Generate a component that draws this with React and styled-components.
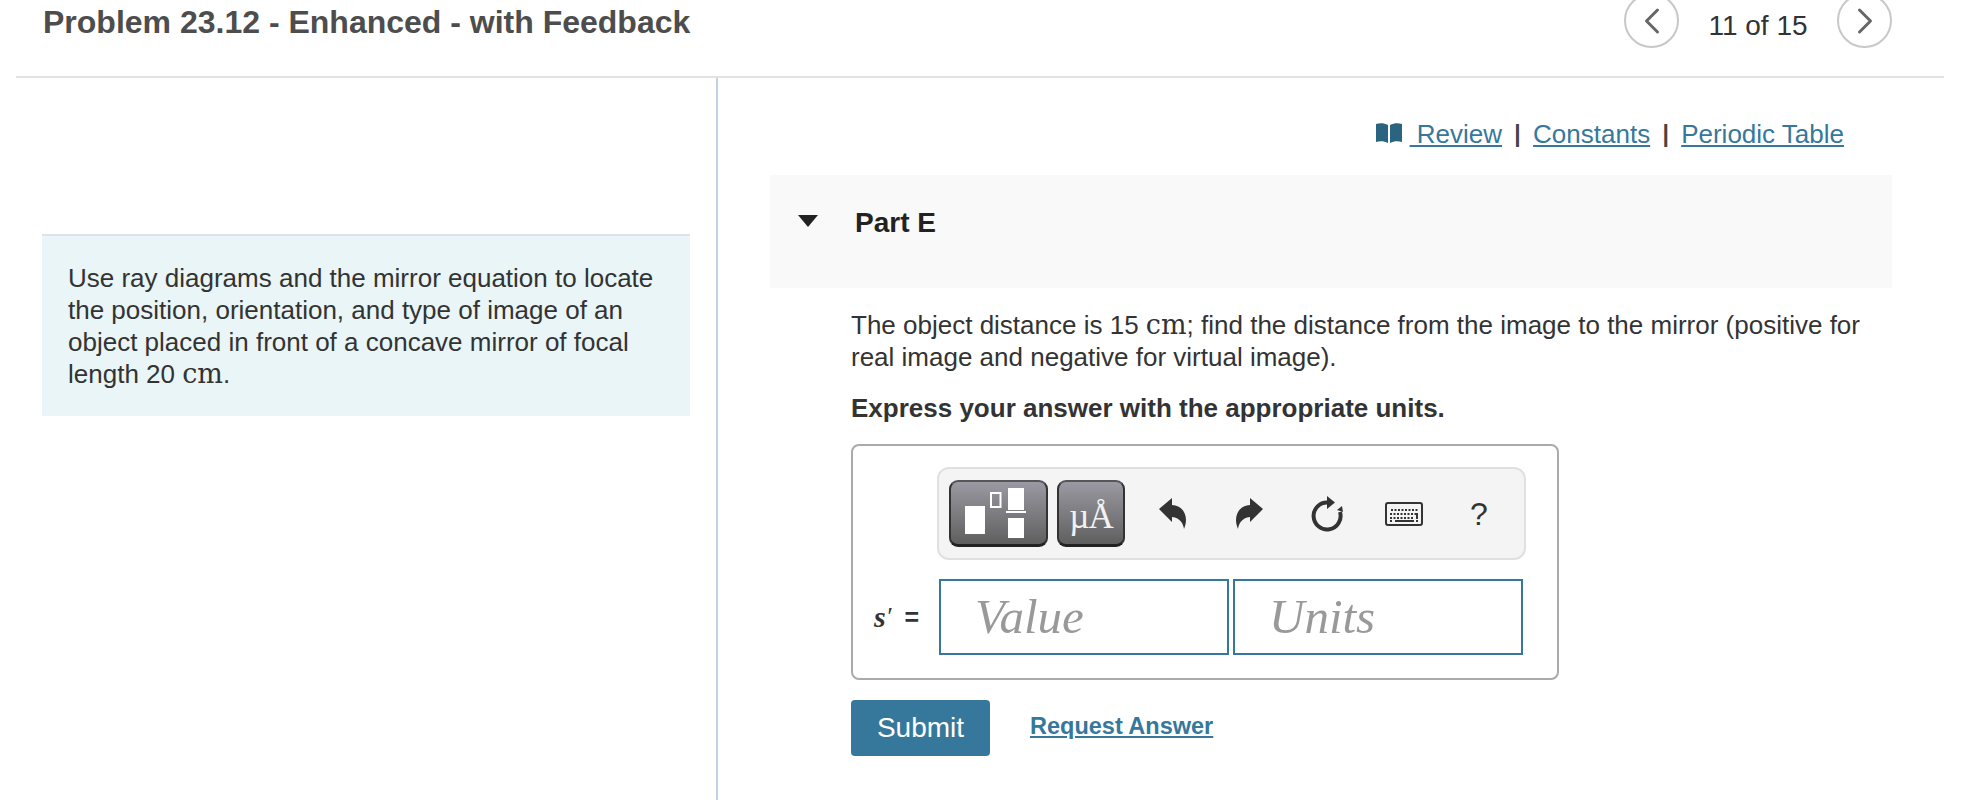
import React from 'react';
import styled, { createGlobalStyle } from 'styled-components';
import { ChevronLeft, ChevronRight } from 'lucide-react';

const teal = '#36789b';
const sans = '"Liberation Sans", Arial, sans-serif';

const GlobalStyle = createGlobalStyle`
  html, body {
    margin: 0;
    background: #fff;
    font-family: ${sans};
    color: #333;
    overflow: hidden;
  }
`;

const Page = styled.div`
  width: 1928px;
  height: 800px;
  margin-left: 16px;
  overflow: hidden;
`;

const Header = styled.header`
  height: 76px;
  border-bottom: 2px solid #e2e2e2;
  padding: 0 52px 0 27px;
  display: flex;
  justify-content: space-between;
  align-items: flex-start;
`;

const Title = styled.h1`
  margin: 0;
  font-size: 32px;
  line-height: 44px;
  font-weight: 700;
  color: #4d4d4d;
`;

const Pager = styled.nav`
  display: flex;
  align-items: flex-start;
`;

const Count = styled.span`
  width: 158px;
  text-align: center;
  font-size: 28px;
  line-height: 51px;
  color: #333;
`;

const RoundButton = styled.button`
  width: 55px;
  height: 55px;
  margin-top: -7px;
  padding: 0;
  border: 2px solid #c8c8c8;
  border-radius: 50%;
  background: #fff;
  color: #666;
  display: flex;
  align-items: center;
  justify-content: center;
`;

const Columns = styled.div`
  display: grid;
  grid-template-columns: 700px 1fr;
  height: 722px;
`;

const LeftColumn = styled.aside`
  padding: 156px 0 0 26px;
`;

const Intro = styled.div`
  width: 648px;
  box-sizing: border-box;
  height: 182px;
  padding: 26px 26px 0;
  background: #e9f5f7;
  border-top: 2px solid #dfe3e5;
  font-size: 26px;
  line-height: 32px;
  color: #333;
`;

const Unit = styled.span`
  font-family: "DejaVu Serif", serif;
  font-size: 27px;
  line-height: 0;
`;

const RightColumn = styled.main`
  border-left: 2px solid #c4d0e4;
  padding: 0 52px;
`;

const LinkRow = styled.div`
  height: 97px;
  box-sizing: border-box;
  padding: 40px 48px 0 0;
  display: flex;
  justify-content: flex-end;
  align-items: flex-start;
  font-size: 26px;
  line-height: 32px;
`;

const TextLink = styled.a`
  color: ${teal};
  text-decoration: underline;
  white-space: pre;
`;

const Separator = styled.span`
  width: 31px;
  text-align: center;
  font-size: 23px;
  font-weight: 700;
  color: #444;
`;

const BookIcon = styled.svg`
  width: 26px;
  height: 20px;
  margin: 5px 8px 0 0;
`;

const PartPanel = styled.section`
  height: 113px;
  box-sizing: border-box;
  padding: 31px 0 0 28px;
  background: #f9f9f9;
  display: flex;
  align-items: flex-start;
`;

const Caret = styled.span`
  width: 0;
  height: 0;
  margin-top: 9px;
  border-left: 10.5px solid transparent;
  border-right: 10.5px solid transparent;
  border-top: 12px solid #222;
`;

const PartTitle = styled.h2`
  margin: 1px 0 0 37px;
  font-size: 28px;
  line-height: 32px;
  font-weight: 700;
  color: #222;
`;

const PartBody = styled.div`
  padding: 21px 0 0 81px;
`;

const Prompt = styled.p`
  margin: 0;
  font-size: 26px;
  line-height: 32px;
  color: #333;
`;

const Instruction = styled.p`
  margin: 19px 0 0;
  font-size: 26px;
  line-height: 32px;
  font-weight: 700;
  color: #333;
`;

const AnswerBox = styled.div`
  width: 708px;
  height: 236px;
  box-sizing: border-box;
  margin-top: 20px;
  padding-top: 21px;
  border: 2px solid #aaa;
  border-radius: 8px;
`;

const Toolbar = styled.div`
  width: 589px;
  height: 93px;
  box-sizing: border-box;
  margin-left: 84px;
  padding: 11px 0 0 10px;
  background: #f4f4f4;
  border: 2px solid #e0e0e0;
  border-radius: 12px;
  display: flex;
  align-items: flex-start;
`;

const PaletteButton = styled.button`
  width: ${(p) => p.$width}px;
  height: 67px;
  margin-right: 9px;
  padding: 0;
  box-sizing: border-box;
  border: 2px solid #3a3a3a;
  border-bottom-width: 3px;
  border-color: #55555a #333 #222 #333;
  border-radius: 9px;
  background: linear-gradient(#9b99a2, #5f5f5f);
  color: #fff;
  display: flex;
  align-items: center;
  justify-content: center;
`;

const TemplateIcon = styled.svg`
  width: 62px;
  height: 52px;
  margin-right: 5px;
`;

const UnitGlyph = styled.span`
  font-family: "Liberation Serif", serif;
  font-size: 35px;
  letter-spacing: -1px;
  line-height: 1;
  margin-top: 6px;
  color: #f2f2f2;
`;

const ToolSlot = styled.span`
  width: 77px;
  height: 67px;
  flex: none;
  display: flex;
  align-items: center;
  justify-content: center;
  color: #333;
`;

const ToolGroup = styled.div`
  display: flex;
`;

const Mirrored = styled.svg`
  transform: ${(p) => (p.$flip ? 'scaleX(-1)' : 'none')};
`;

const Help = styled.span`
  margin-right: 3px;
  font-size: 32px;
  line-height: 1;
`;

const AnswerRow = styled.div`
  margin-top: 19px;
  padding-left: 21px;
  display: flex;
  align-items: center;
`;

const Label = styled.span`
  width: 65px;
  flex: none;
  display: flex;
  align-items: center;
  color: #333;
`;

const Symbol = styled.i`
  font-family: "Liberation Serif", serif;
  font-size: 30px;
  font-weight: 700;
`;

const Prime = styled.sup`
  font-family: "Liberation Serif", serif;
  font-size: 26px;
  font-style: italic;
  line-height: 0;
`;

const Equals = styled.span`
  margin-left: 13px;
  font-size: 25px;
  font-weight: 700;
`;

const Field = styled.input`
  width: 290px;
  height: 76px;
  box-sizing: border-box;
  margin-right: 4px;
  padding: 0 0 1px 34px;
  border: 2px solid ${teal};
  border-radius: 0;
  outline: none;
  background: #fff;
  font-family: "Liberation Serif", serif;
  font-style: italic;
  font-size: 49px;

  &::placeholder {
    color: #999;
    opacity: 1;
  }
`;

const Actions = styled.div`
  margin-top: 20px;
  display: flex;
  align-items: center;
`;

const Submit = styled.button`
  width: 139px;
  height: 56px;
  padding: 0;
  border: 0;
  border-radius: 4px;
  background: ${teal};
  color: #fff;
  font-family: ${sans};
  font-size: 28px;
`;

const RequestLink = styled.a`
  margin: -4px 0 0 40px;
  color: ${teal};
  font-size: 23.5px;
  font-weight: 700;
  text-decoration: underline;
`;

function Undo({ flip }) {
  return (
    <Mirrored $flip={flip} width="27" height="31" viewBox="0 0 27 31">
      <path
        fill="currentColor"
        d="M0 11 13 0v7c9 .5 14 7 14 15 0 3-.8 6-2 9-.6-5-3.500-11-12-12v5z"
      />
    </Mirrored>
  );
}

function Reset() {
  return (
    <svg width="32" height="36" viewBox="0 0 32 36">
      <path
        fill="none"
        stroke="currentColor"
        strokeWidth="4"
        d="M17 6.500A13.500 13.500 0 1 0 29 16"
      />
      <path fill="currentColor" d="M16 0l8 6.500-8 6.500zM26 14l5-4 1 6z" />
    </svg>
  );
}

function Keyboard() {
  const dots = [];
  for (let i = 0; i < 8; i += 1) dots.push([6 + i * 3.500, 7]);
  for (let i = 0; i < 8; i += 1) dots.push([5 + i * 3.500, 11]);
  for (let i = 0; i < 7; i += 1) dots.push([5 + i * 3.500, 15]);
  return (
    <svg width="38" height="24" viewBox="0 0 38 24">
      <rect x="1" y="1" width="36" height="22" rx="2" fill="none" stroke="currentColor" strokeWidth="2" />
      {dots.map(([x, y]) => (
        <rect key={`${x}-${y}`} x={x} y={y} width="2" height="2" fill="currentColor" />
      ))}
      <rect x="10" y="18" width="19" height="2" fill="currentColor" />
      <rect x="5" y="18" width="2" height="2" fill="currentColor" />
      <rect x="31" y="18" width="2" height="2" fill="currentColor" />
      <rect x="31" y="11" width="2" height="6" fill="currentColor" />
    </svg>
  );
}

function App() {
  return (
    <Page>
      <GlobalStyle />
      <Header>
        <Title>Problem 23.12 - Enhanced - with Feedback</Title>
        <Pager>
          <RoundButton aria-label="Previous">
            <ChevronLeft size={44} strokeWidth={1.6} />
          </RoundButton>
          <Count>11 of 15</Count>
          <RoundButton aria-label="Next">
            <ChevronRight size={44} strokeWidth={1.6} />
          </RoundButton>
        </Pager>
      </Header>
      <Columns>
        <LeftColumn>
          <Intro>
            Use ray diagrams and the mirror equation to locate the position, orientation, and type
            of image of an object placed in front of a concave mirror of focal length 20{' '}
            <Unit>cm</Unit>.
          </Intro>
        </LeftColumn>
        <RightColumn>
          <LinkRow>
            <BookIcon viewBox="0 0 26 20">
              <path fill="#2a6480" d="M0 1c4-1 8-1 12 1v18c-4-2-8-2-12-1zM14 2c4-2 8-2 12-1v18c-4-1-8-1-12 1z" />
            </BookIcon>
            <TextLink href="#review"> Review</TextLink>
            <Separator>|</Separator>
            <TextLink href="#constants">Constants</TextLink>
            <Separator>|</Separator>
            <TextLink href="#table">Periodic Table</TextLink>
          </LinkRow>
          <PartPanel>
            <Caret />
            <PartTitle>Part E</PartTitle>
          </PartPanel>
          <PartBody>
            <Prompt>
              The object distance is 15 <Unit>cm</Unit>; find the distance from the image to the
              mirror (positive for real image and negative for virtual image).
            </Prompt>
            <Instruction>Express your answer with the appropriate units.</Instruction>
            <AnswerBox>
              <Toolbar>
                <PaletteButton $width={99} aria-label="Templates">
                  <TemplateIcon viewBox="0 0 62 52">
                    <rect x="0" y="19" width="20" height="28" fill="#fff" />
                    <rect x="26" y="6" width="9.500" height="14" fill="none" stroke="#fff" strokeWidth="2" />
                    <rect x="43" y="1" width="16" height="22" fill="#fff" />
                    <rect x="41" y="24" width="20" height="2" fill="#fff" />
                    <rect x="43" y="31" width="16" height="20" fill="#fff" />
                  </TemplateIcon>
                </PaletteButton>
                <PaletteButton $width={68} aria-label="Units">
                  <UnitGlyph>µÅ</UnitGlyph>
                </PaletteButton>
                <ToolGroup>
                  <ToolSlot><Undo /></ToolSlot>
                  <ToolSlot><Undo flip /></ToolSlot>
                  <ToolSlot><Reset /></ToolSlot>
                  <ToolSlot><Keyboard /></ToolSlot>
                  <ToolSlot><Help>?</Help></ToolSlot>
                </ToolGroup>
              </Toolbar>
              <AnswerRow>
                <Label>
                  <Symbol>s</Symbol>
                  <Prime>′</Prime>
                  <Equals>=</Equals>
                </Label>
                <Field placeholder="Value" />
                <Field placeholder="Units" />
              </AnswerRow>
            </AnswerBox>
            <Actions>
              <Submit>Submit</Submit>
              <RequestLink href="#answer">Request Answer</RequestLink>
            </Actions>
          </PartBody>
        </RightColumn>
      </Columns>
    </Page>
  );
}

export default App;
